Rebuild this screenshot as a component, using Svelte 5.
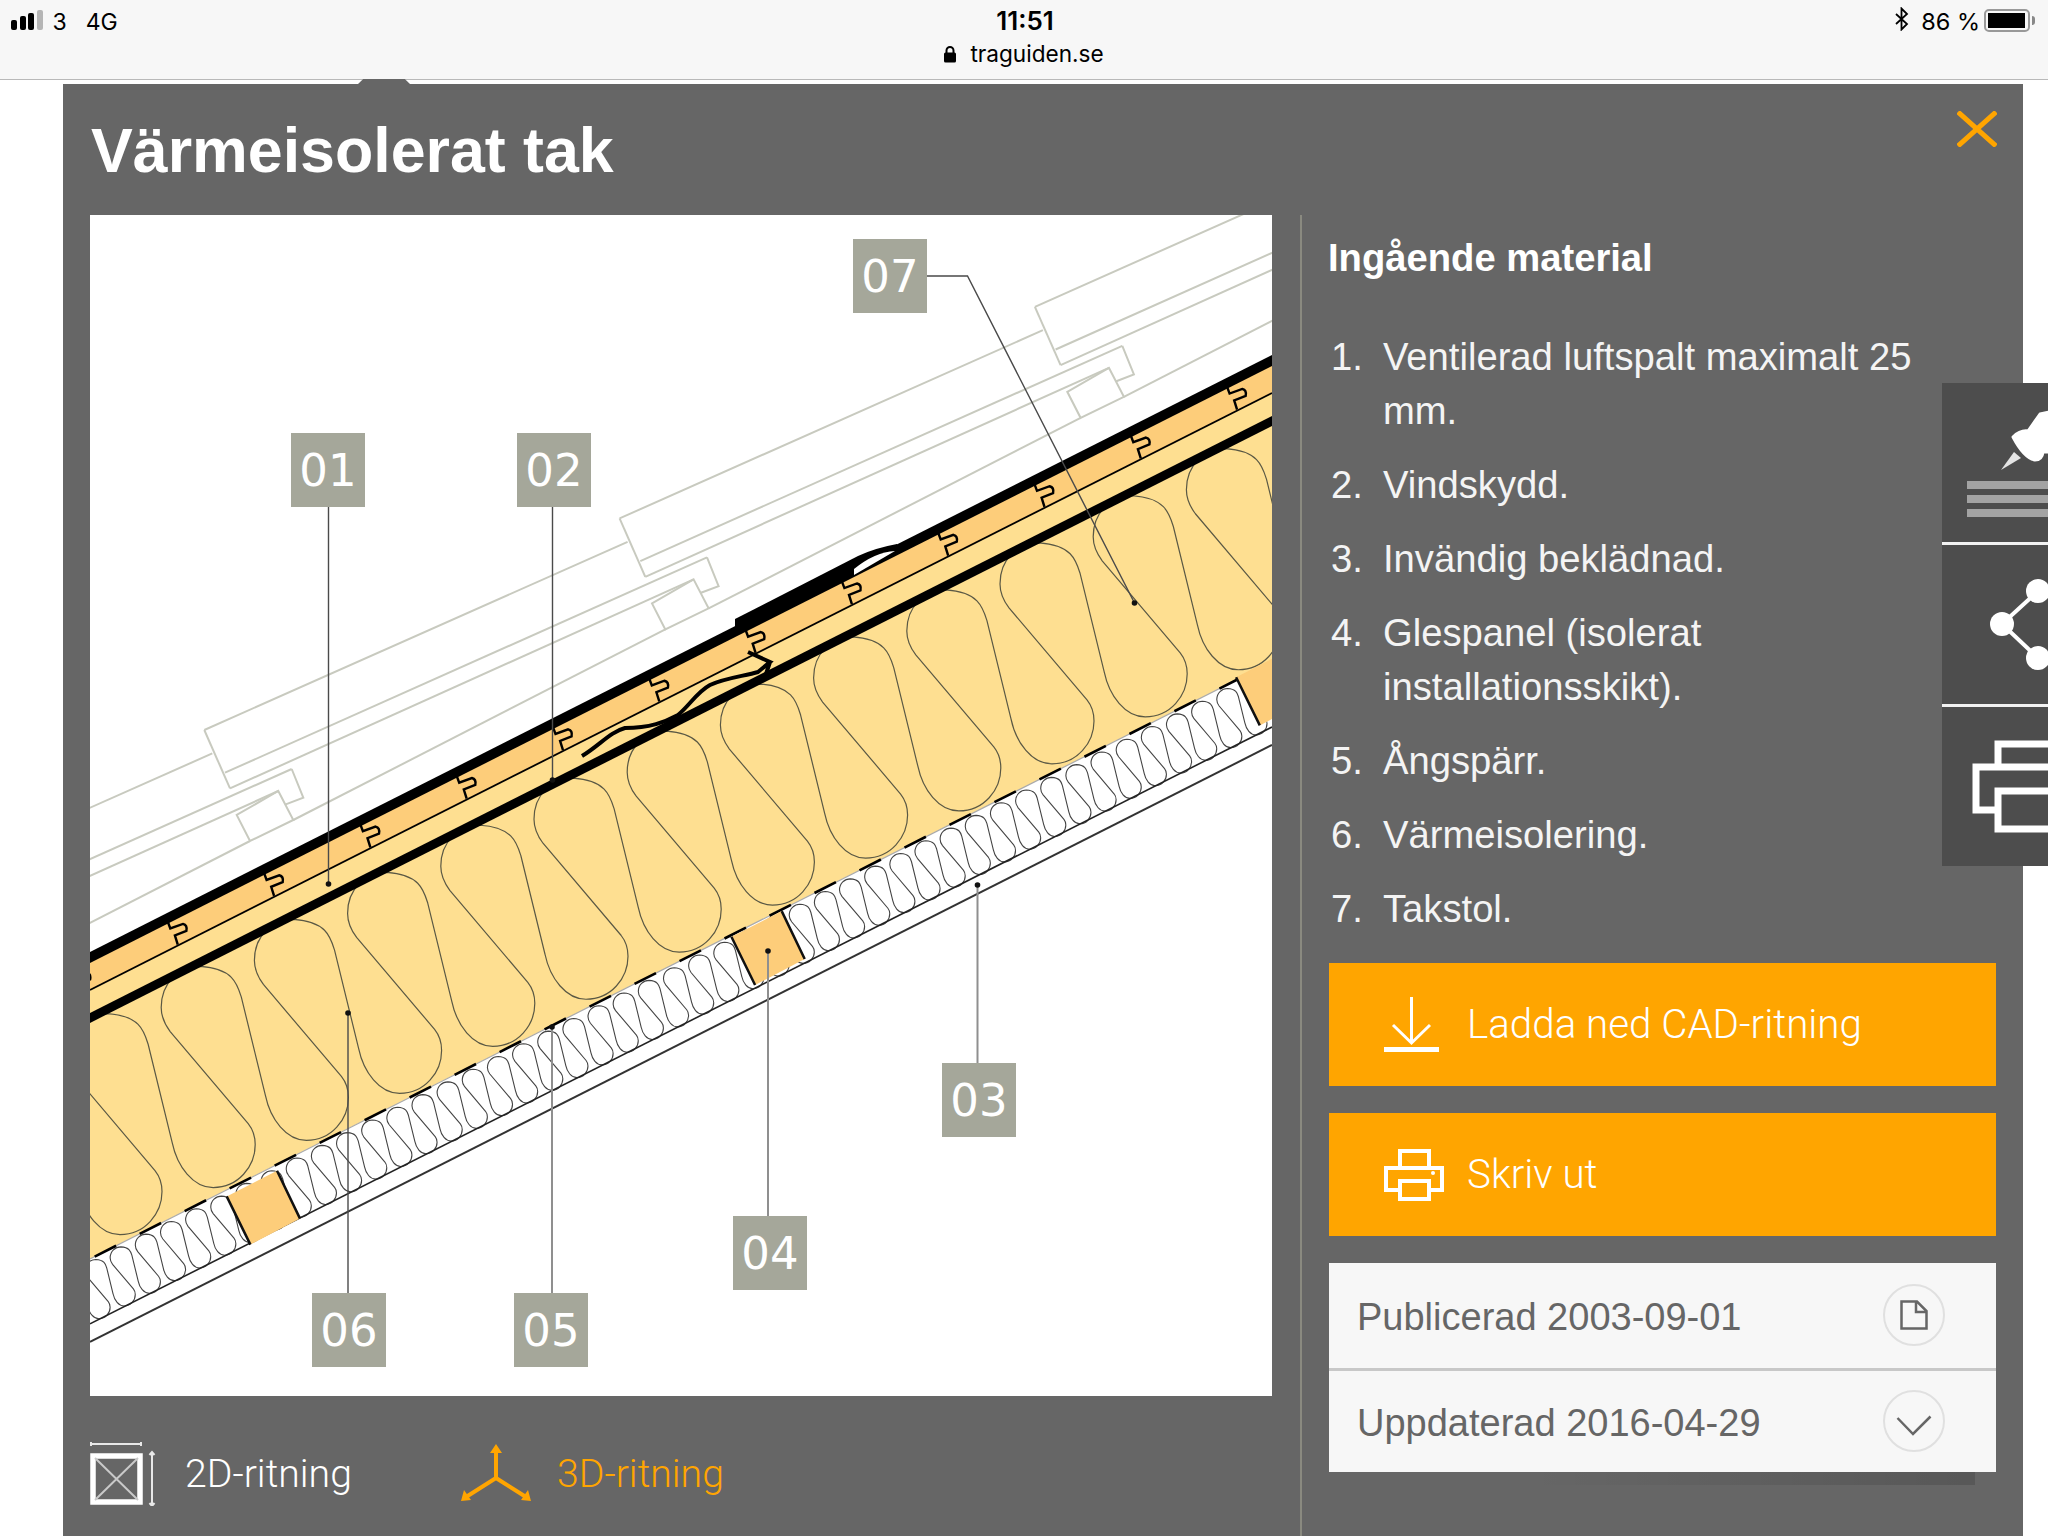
<script>
  const materials = [
    'Ventilerad luftspalt maximalt 25 mm.',
    'Vindskydd.',
    'Invändig beklädnad.',
    'Glespanel (isolerat installationsskikt).',
    'Ångspärr.',
    'Värmeisolering.',
    'Takstol.'
  ];

  const labels = [
    { t: '01', x: 291, y: 433 },
    { t: '02', x: 517, y: 433 },
    { t: '03', x: 942, y: 1063 },
    { t: '04', x: 733, y: 1216 },
    { t: '05', x: 514, y: 1293 },
    { t: '06', x: 312, y: 1293 },
    { t: '07', x: 853, y: 239 }
  ];

  const leaders = [
    { d: 'M328.5 507V884', x: 328.5, y: 884, soft: false },
    { d: 'M552.5 507V780', x: 552.5, y: 780, soft: false },
    { d: 'M977.5 1063V885', x: 977.5, y: 885, soft: true },
    { d: 'M768 1216V951', x: 768, y: 951, soft: true },
    { d: 'M552 1293V1027', x: 552, y: 1027, soft: true },
    { d: 'M348 1293V1013', x: 348, y: 1013, soft: false },
    { d: 'M927 276H967.5L1134.5 603', x: 1134.5, y: 603, soft: false }
  ];

  const SLOPE = 0.505;
  const yAt = (c, x) => c + (1272 - x) * SLOPE;

  const band = (c1, c2) =>
    `90,${yAt(c1, 90)} 1272,${c1} 1272,${c2} 90,${yAt(c2, 90)}`;

  // one period of the wool zigzag, relative segments, repeated along the slope
  function wool(x, y, n, s, period) {
    const p = (...v) => v.map((a) => (a * s).toFixed(2)).join(' ');
    const lastX = period / s - 54;
    const lastY = 6 - (period * SLOPE) / s;
    const unit =
      `c${p(33, 2, 37, 18, 41, 31)}l${p(24, 98)}c${p(5, 24, 21, 45, 41, 45)}` +
      `c${p(25, 0, 42, -21, 42, -43)}c${p(0, -9, -3, -16, -7, -21)}l${p(-78, -92)}` +
      `c${p(-6, -8, -9, -16, -9, -24)}c${p(0, -25, lastX - 21, lastY, lastX, lastY)}`;
    return `M${x} ${y}` + unit.repeat(n);
  }

  const tongues = [];
  for (let i = -1; i < 13; i++) {
    tongues.push({ x: 1236.5 - 96.3 * i, y: 397 + 96.3 * i * SLOPE });
  }

  const tileUnits = [-1, 0, 1, 2, 3].map((k) => ({
    x: 204.3 + 415.3 * k,
    y: 730 - 211.6 * k
  }));

  const blocks = [0, 1, 2].map((k) => ({ x: 504.7 * k, y: -259.6 * k }));
</script>

<div class="page">
  <header class="status">
    <div class="carrier">
      <span class="bars"><i></i><i></i><i></i><i class="off"></i></span>
      <span>3</span>
      <span class="net">4G</span>
    </div>
    <div class="center">
      <div class="time">11:51</div>
      <div class="url">
        <svg width="14" height="18" viewBox="0 0 14 18">
          <path d="M3.5 8V5.5a3.5 3.5 0 0 1 7 0V8" fill="none" stroke="#000" stroke-width="2" />
          <rect x="1" y="7.5" width="12" height="10" rx="1.5" fill="#000" />
        </svg>
        traguiden.se
      </div>
    </div>
    <div class="right">
      <svg width="14" height="24" viewBox="0 0 14 24">
        <path d="M1 7L12 17L6.5 22.500V1.500L12 7L1 17" fill="none" stroke="#000" stroke-width="1.800" />
      </svg>
      <span class="pct">86 %</span>
      <span class="battery"><b></b></span>
      <span class="nub"></span>
    </div>
  </header>

  <span class="notch"></span>

  <main class="modal">
    <div class="top">
      <h1>Värmeisolerat tak</h1>
      <svg class="close" width="40" height="36" viewBox="0 0 40 36">
        <path d="M1 1L39 35M39 1L1 35" stroke="#ffa500" stroke-width="5" fill="none" />
      </svg>
    </div>

    <div class="cols">
      <section class="left">
        <svg class="drawing" width="1182" height="1181" viewBox="90 215 1182 1181">
          <rect x="90" y="215" width="1182" height="1181" fill="#fff" />

          <!-- tiles and battens -->
          {#each tileUnits as u}
            <g transform="translate({u.x} {u.y})" fill="none" stroke="#c8cabf" stroke-width="2">
              <path d="M0 0L25.700 58.400" />
              <path d="M0 0L423.300 -188.200" />
              <path d="M20.700 42.700L502.700 -172.600" />
              <path d="M25.700 58.400L489.300 -150.600" />
              <path d="M87.400 39L99 67.700L81.400 74.400" />
              <path d="M74 61L89 90L45.700 111L32.400 85Z" />
              <path d="M89 90L461 -100.600" />
            </g>
          {/each}

          <!-- roof layers -->
          <polygon points={band(365, 393)} fill="#fdcd7a" />
          <polygon points={band(393, 662)} fill="#fedf91" />
          <polygon points={band(662, 727)} fill="#fff" />

          <path d={wool(14, 1060.6, 15, 1, 93.2)} fill="none" stroke="#5a5844" stroke-width="1.200" />
          <path d={wool(-30, 1323, 52, 0.267, 25.15)} fill="none" stroke="#444" stroke-width="1.100" />

          <polygon points={band(355, 366)} fill="#000" />
          <polygon points={band(416, 426)} fill="#000" />
          <line x1="90" y1={yAt(393, 90)} x2="1272" y2="393" stroke="#000" stroke-width="1.800" />
          <line x1="90" y1={yAt(662, 90)} x2="1272" y2="662" stroke="#aaa" stroke-width="1.200" />
          <line
            x1="49.700"
            y1={yAt(662, 49.7)}
            x2="1272"
            y2="662"
            stroke="#000"
            stroke-width="2.600"
            stroke-dasharray="24 26.400"
          />
          <line x1="90" y1={yAt(727, 90)} x2="1272" y2="727" stroke="#222" stroke-width="1.600" />
          <line x1="90" y1={yAt(745, 90)} x2="1272" y2="745" stroke="#333" stroke-width="2" />

          {#each tongues as t}
            <path
              transform="translate({t.x} {t.y}) scale(1.150)"
              d="M-9 -11L-6 -3L5 -7Q9 -6 8 -1L-2 3L0.500 11"
              fill="none"
              stroke="#000"
              stroke-width="2.100"
            />
          {/each}

          <!-- overlap of the wind barrier -->
          <path d="M735 619L858 556Q875 548 897 544L900 552L735 636Z" fill="#000" />
          <path d="M854 569Q875 552 895 551L854 575Z" fill="#fff" />
          <path
            d="M582 756C600 745 610 732 625 728C650 728 665 722 678 715C690 705 697 692 710 685C725 678 745 676 758 672L770 662L748 652M770 662L764 680"
            fill="none"
            stroke="#000"
            stroke-width="4"
          />

          <!-- rafters -->
          {#each blocks as b}
            <g transform="translate({b.x} {b.y})">
              <polygon points="226.700,1196.400 277,1170.700 300,1218.600 250.400,1244.600" fill="#fdcd7a" />
              <path d="M226.700 1196.400L250.400 1244.600M277 1170.700L300 1218.600" stroke="#111" stroke-width="2.500" fill="none" />
            </g>
          {/each}

          <!-- leaders -->
          {#each leaders as l}
            <path d={l.d} fill="none" stroke={l.soft ? '#8f8f8f' : '#4a4a4a'} stroke-width={l.soft ? 2 : 1.400} />
            <circle cx={l.x} cy={l.y} r="2.800" fill="#111" />
          {/each}

          {#each labels as l}
            <rect x={l.x} y={l.y} width="74" height="74" fill="#a5a79a" />
            <text class="tag" x={l.x + 37} y={l.y + 53}>{l.t}</text>
          {/each}
        </svg>

        <nav class="tabs">
          <div class="tab plain">
            <svg width="66" height="64" viewBox="0 0 66 64">
              <path d="M0 2H52M1 0V4M51 0V4" stroke="#e8e8e8" stroke-width="2" fill="none" />
              <path d="M3 14H50V60H3Z" fill="none" stroke="#fff" stroke-width="5.500" />
              <path d="M5 16L48 58M48 16L5 58" stroke="#c9c9c9" stroke-width="2" fill="none" />
              <path d="M62 11V63M59.500 13L62 10L64.500 13M59.500 61L62 64L64.500 61" stroke="#e8e8e8" stroke-width="2" fill="none" />
            </svg>
            <span>2D-ritning</span>
          </div>
          <div class="tab active">
            <svg width="70" height="60" viewBox="0 0 70 60">
              <path d="M35 5V34M35 34L5 53M35 34L65 53" stroke="#ffa500" stroke-width="4" fill="none" />
              <path d="M35 0L41 9H29ZM0 57L3 46L10 56ZM70 57L60 56L67 46Z" fill="#ffa500" />
            </svg>
            <span>3D-ritning</span>
          </div>
        </nav>
      </section>

      <aside class="info">
        <h2>Ingående material</h2>
        <ol>
          {#each materials as m, i}
            <li><span class="no">{i + 1}.</span><span>{m}</span></li>
          {/each}
        </ol>

        <button class="cta">
          <svg class="dl" width="56" height="56" viewBox="0 0 56 56">
            <path d="M27.500 0V46M9 28L27.500 46L46 28" fill="none" stroke="#fff" stroke-width="3" />
            <path d="M0 52.500H55" stroke="#fff" stroke-width="5" />
          </svg>
          <span>Ladda ned CAD-ritning</span>
        </button>
        <button class="cta">
          <svg class="pr" width="60" height="52" viewBox="0 0 60 52">
            <path d="M16 18V2H45V18" fill="none" stroke="#fff" stroke-width="4" />
            <path d="M16 41H2V19H58V41H45" fill="none" stroke="#fff" stroke-width="4" />
            <path d="M16 32H45V50H16Z" fill="none" stroke="#fff" stroke-width="4" />
            <circle cx="49" cy="24" r="2" fill="#fff" />
          </svg>
          <span>Skriv ut</span>
        </button>

        <div class="dates">
          <div class="row">
            <span class="date">Publicerad 2003-09-01</span>
            <span class="round">
              <svg width="28" height="30" viewBox="0 0 28 30">
                <path d="M1.500 1.500H17L26.500 11V28.500H1.500ZM16 1.500V12H26.500" fill="none" stroke="#666" stroke-width="2.500" />
              </svg>
            </span>
          </div>
          <div class="row">
            <span class="date">Uppdaterad 2016-04-29</span>
            <span class="round">
              <svg width="36" height="22" viewBox="0 0 36 22" class="check">
                <path d="M1.500 3L17 19L34.500 1.500" fill="none" stroke="#666" stroke-width="2.500" />
              </svg>
            </span>
          </div>
        </div>
      </aside>
    </div>
  </main>

  <div class="tools">
    <div class="tool">
      <svg width="106" height="159" viewBox="1942 383 106 159">
        <polygon points="2001,470 2014,452 2021,458" fill="#e4e4e4" />
        <path
          d="M2013 437Q2020 430 2028 431L2040 414L2050 412V452H2043Q2042 460 2035 460Q2024 458 2013 437Z"
          fill="#fff"
          stroke="#fff"
          stroke-width="3"
          stroke-linejoin="round"
        />
        <path d="M1967 485H2048M1967 499H2048M1967 513H2048" stroke="#a3a3a3" stroke-width="8" fill="none" />
      </svg>
    </div>
    <div class="tool">
      <svg width="106" height="159" viewBox="1942 545 106 159">
        <path d="M2038 591L2002 624L2038 658" stroke="#fff" stroke-width="4" fill="none" />
        <circle cx="2002" cy="624" r="12" fill="#fff" />
        <circle cx="2038" cy="591" r="12" fill="#fff" />
        <circle cx="2038" cy="658" r="12" fill="#fff" />
      </svg>
    </div>
    <div class="tool">
      <svg width="106" height="160" viewBox="1942 707 106 160">
        <path d="M1998 767V744H2060V767" fill="none" stroke="#fff" stroke-width="7" />
        <path d="M1998 810H1976V767H2060" fill="none" stroke="#fff" stroke-width="7" />
        <path d="M1998 791H2060V829H1998Z" fill="none" stroke="#fff" stroke-width="7" />
      </svg>
    </div>
  </div>
</div>

<style>
  :global(body) {
    margin: 0;
    background: #fff;
  }

  .page {
    position: relative;
    width: 2048px;
    height: 1536px;
    overflow: hidden;
    font-family: "Liberation Sans", Arial, sans-serif;
  }

  .status {
    box-sizing: border-box;
    height: 80px;
    display: grid;
    grid-template-columns: 1fr auto 1fr;
    padding: 0 13px 0 11px;
    background: #f7f7f7;
    border-bottom: 1px solid #b9b9b9;
    color: #000;
    font-family: Inter, "Liberation Sans", sans-serif;
    font-size: 23px;
  }

  .carrier {
    display: flex;
    align-items: flex-start;
    padding-top: 8px;
    gap: 10px;
    height: 30px;
  }

  .carrier .net {
    margin-left: 9px;
  }

  .bars {
    display: flex;
    align-items: flex-end;
    gap: 2.500px;
    height: 20px;
    margin-top: 2px;
  }

  .bars i {
    display: block;
    width: 6px;
    background: #000;
    border-radius: 2px;
    height: 10px;
  }

  .bars i:nth-child(2) {
    height: 14px;
  }

  .bars i:nth-child(3) {
    height: 17px;
  }

  .bars i.off {
    height: 20px;
    background: #b5b5b5;
  }

  .center {
    text-align: center;
    padding-top: 7px;
  }

  .time {
    font-weight: 600;
    font-size: 26px;
    line-height: 28px;
    margin-left: 4px;
  }

  .url {
    display: flex;
    align-items: center;
    gap: 13px;
    font-size: 22.600px;
    line-height: 30px;
    margin-top: 4px;
    margin-left: 1px;
  }

  .right {
    display: flex;
    justify-content: flex-end;
    align-items: flex-start;
    padding-top: 7px;
  }

  .pct {
    margin-left: 12px;
    margin-right: 4px;
    font-size: 23.500px;
  }

  .battery {
    box-sizing: border-box;
    display: block;
    width: 46px;
    height: 23px;
    border: 2px solid #999;
    border-radius: 5px;
    padding: 2px;
    margin-top: 2px;
  }

  .battery b {
    display: block;
    width: 37px;
    height: 15px;
    background: #000;
  }

  .nub {
    width: 3px;
    height: 9px;
    margin: 9px 0 0 2px;
    background: #888;
    border-radius: 0 3px 3px 0;
  }

  .notch {
    position: absolute;
    left: 358px;
    top: 79px;
    width: 52px;
    height: 5px;
    background: #666;
    clip-path: polygon(10% 0, 90% 0, 100% 100%, 0 100%);
  }

  .modal {
    box-sizing: border-box;
    width: 1960px;
    height: 1452px;
    margin: 4px 0 0 63px;
    padding-left: 27px;
    background: #666;
    color: #fff;
  }

  .top {
    position: relative;
    height: 131px;
  }

  h1 {
    margin: 0;
    padding: 30px 0 0 1px;
    font-size: 62.700px;
    line-height: 72px;
    font-weight: 700;
  }

  .close {
    position: absolute;
    top: 27px;
    right: 26px;
  }

  .cols {
    display: flex;
  }

  .left {
    width: 1182px;
    flex: none;
  }

  .drawing {
    display: block;
  }

  .tag {
    font-family: "DejaVu Sans", sans-serif;
    font-size: 45px;
    fill: #fff;
    text-anchor: middle;
  }

  .tabs {
    display: flex;
    align-items: center;
    height: 156px;
  }

  .tab {
    display: flex;
    align-items: center;
    font-size: 39.200px;
    font-family: Roboto, "Liberation Sans", sans-serif;
    font-weight: 300;
  }

  .tab.plain {
    width: 371px;
    gap: 29px;
  }

  .tab.active {
    gap: 26px;
    color: #ffa500;
  }

  .info {
    box-sizing: border-box;
    flex: none;
    width: 696px;
    margin-left: 28px;
    padding-left: 27px;
    border-left: 2px solid #8a8a80;
  }

  h2 {
    margin: 0 0 0 -1px;
    padding-top: 19px;
    font-size: 38.200px;
    line-height: 48px;
    font-weight: 700;
  }

  ol {
    list-style: none;
    margin: 48px 0 0;
    padding: 0 70px 0 0;
    font-size: 38.200px;
    line-height: 54px;
    color: #f4f4f4;
  }

  li {
    display: flex;
    margin-bottom: 20px;
  }

  li:last-child {
    margin-bottom: 27px;
  }

  .no {
    flex: none;
    width: 54px;
    padding-left: 2px;
    box-sizing: border-box;
  }

  .cta {
    box-sizing: border-box;
    display: flex;
    align-items: center;
    width: 667px;
    height: 123px;
    margin: 0 0 27px;
    padding: 0 0 0 55px;
    border: 0;
    background: #ffa500;
    color: #fff;
    font-family: Roboto, "Liberation Sans", sans-serif;
    font-weight: 300;
    font-size: 40.300px;
    text-align: left;
  }

  .cta svg {
    flex: none;
  }

  .cta .dl {
    margin-right: 27px;
  }

  .cta .pr {
    margin-right: 23px;
  }

  .dates {
    position: relative;
    width: 667px;
    background: #f7f7f7;
    color: #666;
    font-size: 38px;
  }

  .dates::after {
    content: "";
    position: absolute;
    top: 100%;
    left: 30%;
    right: 21px;
    height: 13px;
    background: linear-gradient(to right, transparent, rgba(0, 0, 0, 0.14));
  }

  .row {
    box-sizing: border-box;
    height: 105px;
    display: flex;
    align-items: center;
    justify-content: space-between;
    padding: 0 51px 0 28px;
  }

  .row + .row {
    height: 104px;
    border-top: 3px solid #c8c8c8;
  }

  .date {
    margin-top: 3px;
  }

  .round {
    box-sizing: border-box;
    width: 62px;
    height: 62px;
    margin-top: -2px;
    display: flex;
    align-items: center;
    justify-content: center;
    border: 2px solid #e0e0e0;
    border-radius: 50%;
  }

  .check {
    margin-top: 10px;
  }

  .tools {
    position: absolute;
    left: 1942px;
    top: 383px;
    width: 106px;
    background: #4d4d4d;
  }

  .tool {
    height: 159px;
  }

  .tool svg {
    display: block;
  }

  .tool + .tool {
    border-top: 3px solid #f2f2f2;
  }
</style>
